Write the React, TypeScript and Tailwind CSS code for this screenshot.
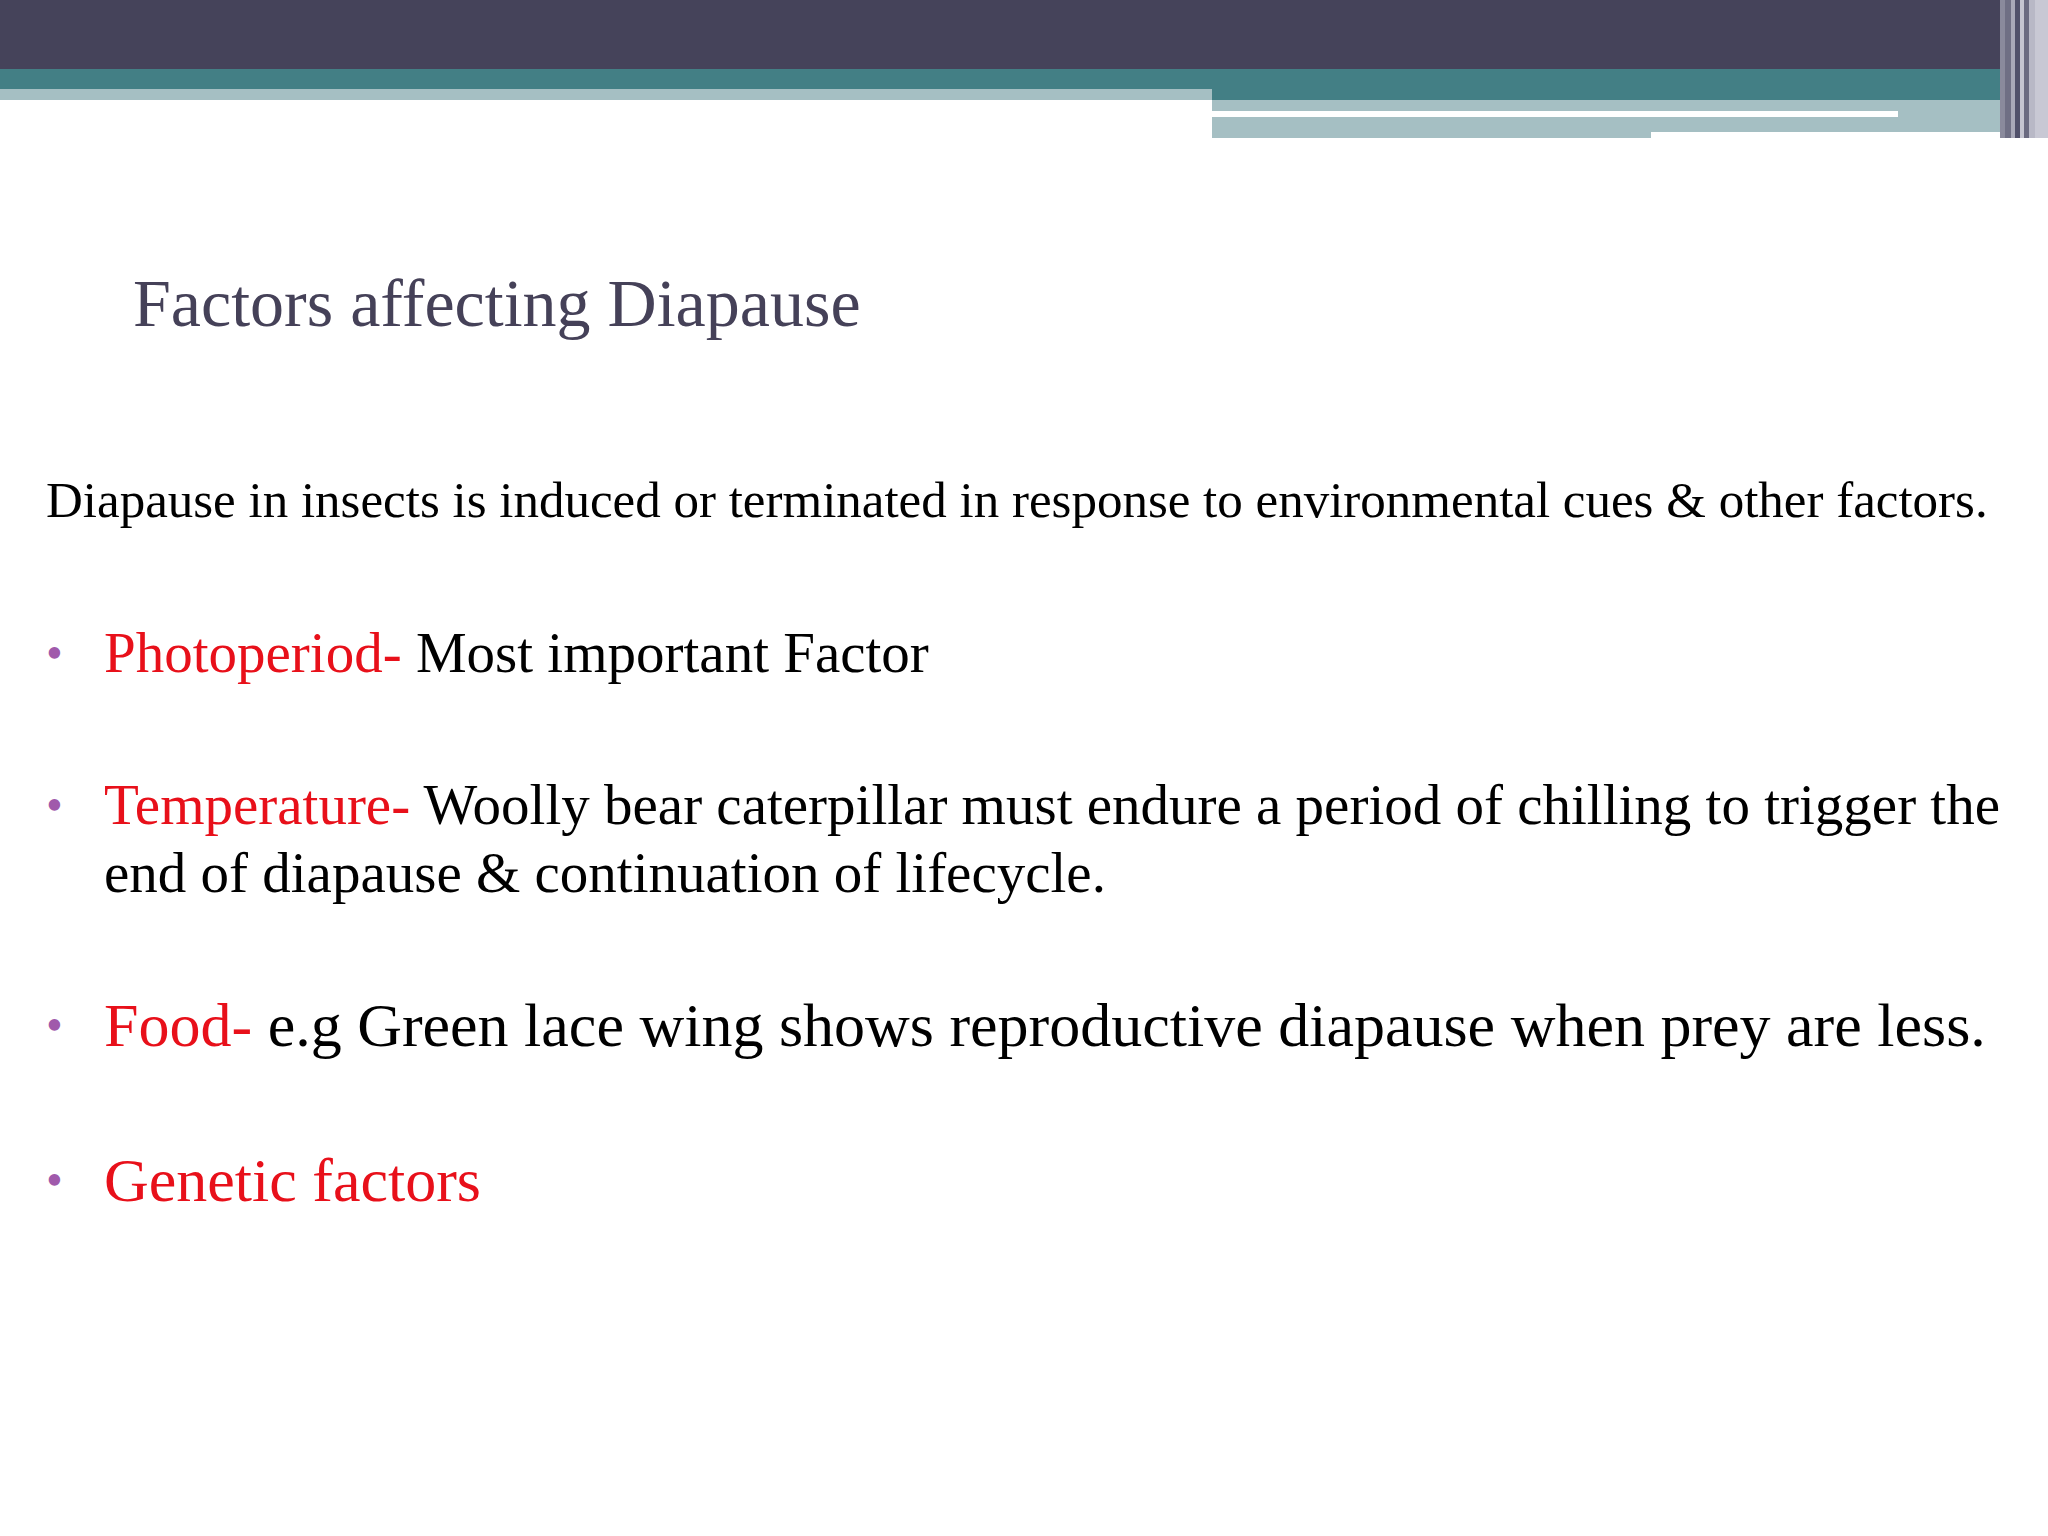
export default function App() {
  const serif = { fontFamily: '"Liberation Serif", "Times New Roman", serif' };
  return (
    <div className="relative w-[2048px] h-[1536px] bg-white overflow-hidden" style={serif}>
      {/* header bands */}
      <div className="h-[69px] bg-[#45435a]" />
      <div className="flex">
        <div className="w-[1212px]">
          <div className="h-[20px] bg-[#437f85]" />
          <div className="h-[11px] bg-[#a5bfc3]" />
        </div>
        <div className="flex-1">
          <div className="h-[31px] bg-[#437f85]" />
          <div className="h-[11px] bg-[#a5bfc3]" />
          <div className="h-[6px] bg-[#a5bfc3] flex"><div className="w-[686px] bg-white" /></div>
          <div className="h-[15px] bg-[#a5bfc3]" />
          <div className="h-[6px] flex"><div className="w-[439px] bg-[#a5bfc3]" /></div>
        </div>
      </div>
      <div className="absolute top-0 right-0 h-[138px] w-[48px] flex">
        <div className="w-[5px] bg-[#8a8a9c]" />
        <div className="w-[6px] bg-[#6f6f84]" />
        <div className="w-[4px] bg-[#a8a8b8]" />
        <div className="w-[5px] bg-[#50506a]" />
        <div className="w-[4px] bg-[#c4c4d0]" />
        <div className="w-[5px] bg-[#6a6a80]" />
        <div className="w-[6px] bg-[#b8b8c6]" />
        <div className="w-[13px] bg-[#c8c8d4]" />
      </div>

      <div className="pl-[133px] pt-[131px] text-[68px] text-[#454158] leading-none">Factors affecting Diapause</div>

      <div className="pl-[46px] pt-[138px] text-[51px] text-black leading-none whitespace-nowrap">
        Diapause in insects is induced or terminated in response to environmental cues &amp; other factors.
      </div>

      <ul className="pl-[46px] pr-[40px] pt-[93px] flex flex-col gap-[84px] text-black">
        <li className="flex text-[57px] leading-[68px]">
          <span className="w-[58px] shrink-0 text-[#a05aab] text-[48px]">•</span>
          <span><span className="text-[#e8101a]">Photoperiod- </span>Most important Factor</span>
        </li>
        <li className="flex text-[57px] leading-[68px]">
          <span className="w-[58px] shrink-0 text-[#a05aab] text-[48px]">•</span>
          <span><span className="text-[#e8101a]">Temperature- </span>Woolly bear caterpillar must endure a period of chilling to trigger the end of diapause &amp; continuation of lifecycle.</span>
        </li>
        <li className="flex text-[62px] leading-[68px] whitespace-nowrap">
          <span className="w-[58px] shrink-0 text-[#a05aab] text-[48px]">•</span>
          <span><span className="text-[#e8101a]">Food- </span>e.g Green lace wing shows reproductive diapause when prey are less.</span>
        </li>
        <li className="flex text-[62px] leading-[68px] mt-[3px]">
          <span className="w-[58px] shrink-0 text-[#a05aab] text-[48px]">•</span>
          <span className="text-[#e8101a]">Genetic factors</span>
        </li>
      </ul>
    </div>
  );
}
